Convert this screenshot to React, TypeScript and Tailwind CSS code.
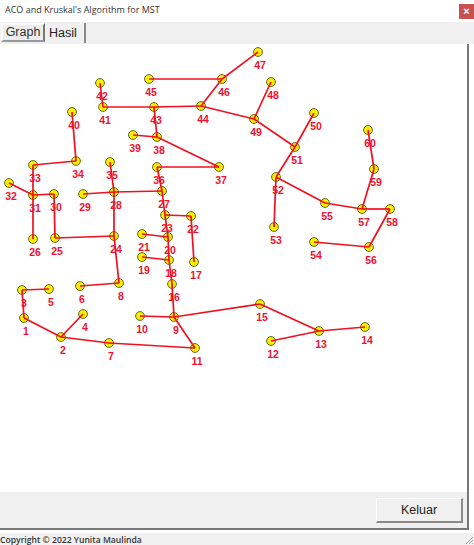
import React from 'react';

// node number -> position in page coordinates
const nodes: Record<number, [number, number]> = {
  1: [24, 318], 2: [61, 337], 3: [22, 290], 4: [83, 314], 5: [49, 289],
  6: [80, 286], 7: [109, 343], 8: [119, 283], 9: [174, 317], 10: [140, 316],
  11: [195, 348], 12: [271, 341], 13: [319, 331], 14: [365, 327], 15: [260, 304],
  16: [172, 284], 17: [194, 262], 18: [169, 260], 19: [142, 257], 20: [168, 237],
  21: [142, 234], 22: [191, 216], 23: [165, 215], 24: [114, 236], 25: [55, 238],
  26: [33, 239], 27: [162, 191], 28: [114, 192], 29: [83, 194], 30: [54, 194],
  31: [33, 195], 32: [9, 183], 33: [33, 165], 34: [76, 161], 35: [110, 162],
  36: [157, 167], 37: [219, 167], 38: [157, 137], 39: [133, 135], 40: [72, 112],
  41: [103, 107], 42: [100, 83], 43: [154, 107], 44: [201, 106], 45: [149, 79],
  46: [222, 79], 47: [258, 52], 48: [271, 82], 49: [254, 119], 50: [314, 113],
  51: [295, 147], 52: [276, 177], 53: [274, 227], 54: [314, 242], 55: [325, 203],
  56: [369, 247], 57: [362, 209], 58: [390, 209], 59: [374, 169], 60: [368, 130]
};

const edges: [number, number][] = [
  [1, 2], [1, 3], [3, 5], [2, 4], [2, 7], [7, 11], [11, 9], [9, 10], [9, 15], [15, 13],
  [13, 12], [13, 14], [9, 16], [16, 18], [18, 19], [18, 20], [20, 21], [20, 23], [23, 22],
  [22, 17], [23, 27], [27, 28], [27, 36], [36, 37], [37, 38], [38, 39], [38, 43], [43, 41],
  [41, 42], [43, 44], [44, 46], [46, 45], [46, 47], [44, 49], [49, 48], [49, 51], [51, 50],
  [51, 52], [52, 53], [52, 55], [55, 57], [57, 58], [57, 59], [59, 60], [58, 56], [56, 54],
  [28, 29], [28, 35], [28, 24], [24, 25], [24, 8], [8, 6], [25, 30], [30, 31], [31, 32],
  [31, 33], [31, 26], [33, 34], [34, 40]
];

function Graph() {
  const ids = Object.keys(nodes).map(Number);
  return (
    <svg viewBox="0 44 467 448" className="block h-[448px] w-[467px]">
      {ids.map((id) => (
        <circle
          key={id}
          cx={nodes[id][0]}
          cy={nodes[id][1]}
          r={4.4}
          fill="#ffee00"
          stroke="#5f6a1c"
          strokeWidth={1}
        />
      ))}
      {edges.map(([a, b]) => (
        <line
          key={`${a}-${b}`}
          x1={nodes[a][0]}
          y1={nodes[a][1]}
          x2={nodes[b][0]}
          y2={nodes[b][1]}
          stroke="#f01020"
          strokeWidth={1.7}
        />
      ))}
      {ids.map((id) => (
        <text
          key={id}
          x={nodes[id][0] + 2}
          y={nodes[id][1] + 17}
          textAnchor="middle"
          fill="#f01030"
          className="font-['Liberation_Sans',sans-serif] text-[10.5px] font-bold"
        >
          {id}
        </text>
      ))}
    </svg>
  );
}

export default function App() {
  return (
    <div className="flex h-[545px] w-[474px] flex-col overflow-hidden bg-white font-['Liberation_Sans',sans-serif]">
      {/* title bar */}
      <div className="flex h-[22px] items-start justify-between bg-white">
        <span className="pl-[5px] pt-[1px] font-['Open_Sans',sans-serif] text-[9px] leading-[18px] text-[#333333]">
          ACO and Kruskal's Algorithm for MST
        </span>
        <div className="mt-[4px] flex h-[15px] w-[15px] items-center justify-center bg-[#c75050] text-[11px] leading-none font-bold text-white">
          ×
        </div>
      </div>

      {/* tabs */}
      <div className="flex h-[22px] items-start bg-[#f0f0f0] pl-[1px] pt-[1px]">
        <div className="flex h-[19px] w-[44px] items-center justify-center border-2 border-r-[#777777] border-b-[#999999] border-t-[#fafafa] border-l-[#fafafa] bg-[#ececec] text-[12.5px] text-[#333333]">
          Graph
        </div>
        <div className="flex h-[20px] w-[41px] items-center border-r-2 border-[#8a8a8a] pl-[4px] pt-[1px] text-[12.5px] text-[#222222]">
          Hasil
        </div>
      </div>

      {/* tab page */}
      <div className="flex h-[486px] w-[469px] flex-col border-r-2 border-b-2 border-[#777777]">
        <Graph />
        <div className="flex flex-1 items-start justify-end bg-[#f0f0f0] pr-[4px] pt-[6px]">
          <div className="flex h-[25px] w-[87px] items-center justify-center border-t border-l border-r-2 border-b-2 border-t-white border-l-white border-r-[#8a8a8a] border-b-[#8a8a8a] bg-[#f0f0f0] text-[12.5px] text-[#222222]">
            Keluar
          </div>
        </div>
      </div>

      {/* status bar */}
      <div className="flex flex-1 flex-col bg-[#f0f0f0]">
        <div className="h-[3px] bg-white" />
        <div className="flex flex-1 items-end justify-between">
          <span className="font-['Open_Sans',sans-serif] text-[8.6px] leading-[10px] font-semibold text-[#333333]">
            Copyright © 2022 Yunita Maulinda
          </span>
          <svg viewBox="0 0 10 10" className="h-[10px] w-[10px]">
            <path d="M9 2 L2 9 M9 5 L5 9 M9 8 L8 9" stroke="#a8a8a8" strokeWidth={1} />
          </svg>
        </div>
      </div>
    </div>
  );
}
